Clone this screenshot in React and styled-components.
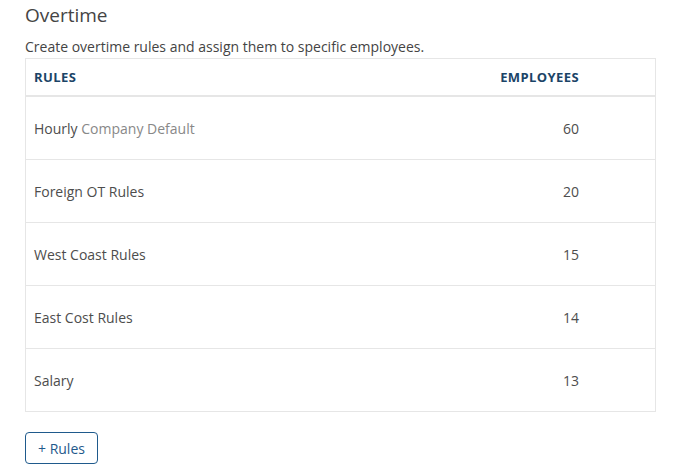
import React from 'react';
import styled, {createGlobalStyle} from 'styled-components';

const Global = createGlobalStyle`
    body {
        margin: 0;
        background: #fff;
        font-family: "Open Sans", "DejaVu Sans", sans-serif;
    }
`;

const Page = styled.div`
    padding: 3px 19px 10px 25px;
`;

const Title = styled.h2`
    margin: 0;
    font-size: 19px;
    font-weight: 400;
    line-height: 25px;
    color: #444;
`;

const Intro = styled.p`
    margin: 9px 0 0;
    font-size: 14px;
    line-height: 19px;
    color: #444;
`;

const Table = styled.table`
    width: 100%;
    border-collapse: collapse;
    border: 1px solid #e6e6e6;
    margin-top: 2px;
`;

const Head = styled.th`
    text-align: ${p => p.$right ? 'right' : 'left'};
    padding: ${p => p.$right ? '0 76px 0 8px' : '0 8px'};
    height: 36px;
    font-size: 13px;
    letter-spacing: 0.4px;
    font-weight: 700;
    color: #1b4467;
    border-bottom: 2px solid #e6e6e6;
`;

const Cell = styled.td`
    text-align: ${p => p.$right ? 'right' : 'left'};
    padding: ${p => p.$right ? '0 76px 0 8px' : '0 8px'};
    height: 62px;
    font-size: 14px;
    color: #4d4d4d;
    border-top: 1px solid #e6e6e6;
`;

const Muted = styled.span`
    color: #888;
`;

const AddButton = styled.button`
    margin-top: 20px;
    height: 32px;
    padding: 0 12px;
    border: 1px solid #1f5a8c;
    border-radius: 4px;
    background: #fff;
    color: #1f5a8c;
    font-family: inherit;
    font-size: 14px;
    cursor: pointer;
`;

const rules = [
    {name: 'Hourly', note: 'Company Default', count: 60},
    {name: 'Foreign OT Rules', count: 20},
    {name: 'West Coast Rules', count: 15},
    {name: 'East Cost Rules', count: 14},
    {name: 'Salary', count: 13},
];

export default function App() {
    return <Page>
        <Global/>
        <Title>Overtime</Title>
        <Intro>Create overtime rules and assign them to specific employees.</Intro>
        <Table>
            <thead>
                <tr>
                    <Head>RULES</Head>
                    <Head $right>EMPLOYEES</Head>
                </tr>
            </thead>
            <tbody>
                {rules.map(r => <tr key={r.name}>
                    <Cell>{r.name}{r.note && <> <Muted>{r.note}</Muted></>}</Cell>
                    <Cell $right>{r.count}</Cell>
                </tr>)}
            </tbody>
        </Table>
        <AddButton>+ Rules</AddButton>
    </Page>;
}
